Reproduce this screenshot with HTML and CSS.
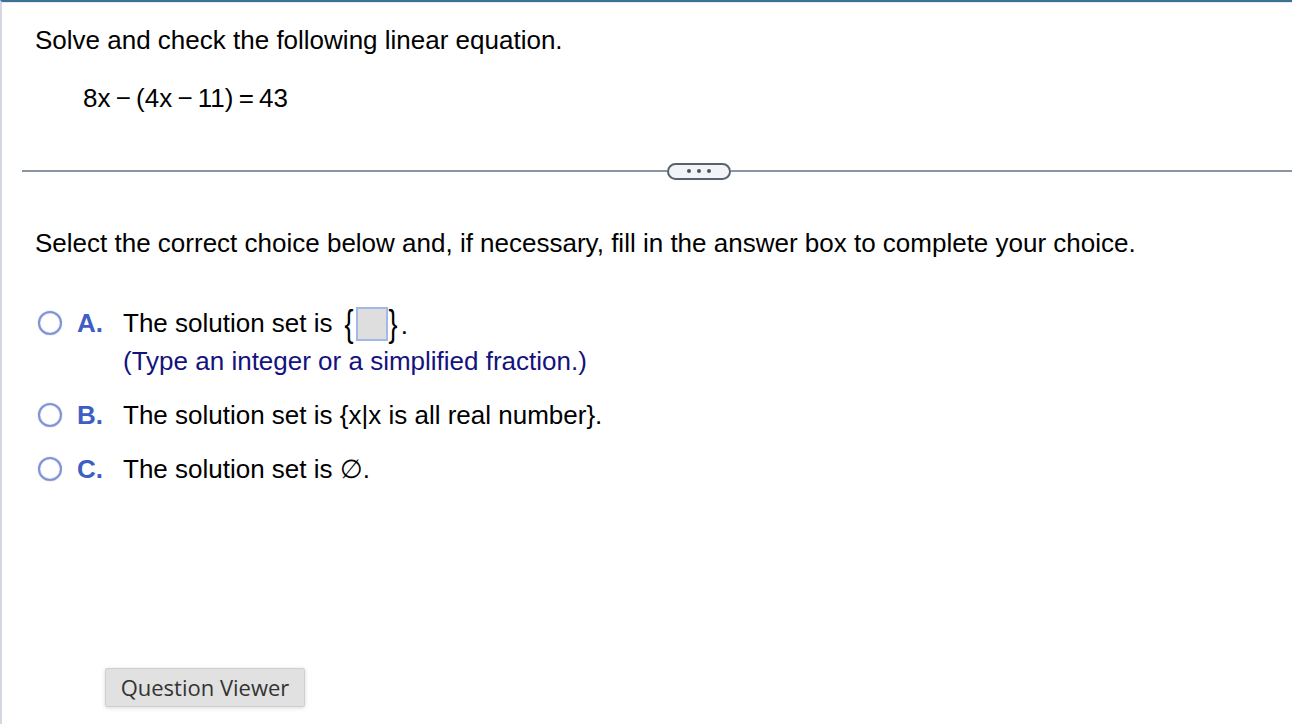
FILE: index.html
```html
<!DOCTYPE html>
<html>
<head>
<meta charset="utf-8">
<link rel="stylesheet" href="styles.css">
</head>
<body>
<div class="page">
  <div class="question">
    <p class="prompt">Solve and check the following linear equation.</p>
    <p class="equation">8x − (4x − 11) = 43</p>
  </div>
  <div class="divider">
    <div class="line"></div>
    <div class="pill"><span></span><span></span><span></span></div>
    <div class="line"></div>
  </div>
  <div class="answer">
    <p class="instr">Select the correct choice below and, if necessary, fill in the answer box to complete your choice.</p>
    <div class="choices">
      <div class="choice">
        <span class="radio"></span>
        <span class="letter">A.</span>
        <div class="body">
          <div class="line1">The solution set is <span class="brace first">{</span><span class="box"></span><span class="brace">}</span><span class="dot">.</span></div>
          <div class="hint">(Type an integer or a simplified fraction.)</div>
        </div>
      </div>
      <div class="choice">
        <span class="radio"></span>
        <span class="letter">B.</span>
        <div class="body">The solution set is {x|x is all real number}.</div>
      </div>
      <div class="choice">
        <span class="radio"></span>
        <span class="letter">C.</span>
        <div class="body">The solution set is ∅.</div>
      </div>
    </div>
  </div>
  <div class="footer">
    <button class="viewer">Question Viewer</button>
  </div>
</div>
</body>
</html>
```
FILE: styles.css
```css
html, body {
  margin: 0;
  padding: 0;
  background: #ffffff;
}
body {
  font-family: "Liberation Sans", Arial, sans-serif;
  color: #000;
  width: 1292px;
  height: 724px;
  overflow: hidden;
}
.page {
  box-sizing: border-box;
  height: 724px;
  border-top: 2px solid #3b7194;
  border-left: 2px solid #d3d7e3;
  box-shadow: inset 0 1px 0 #e6e8ee;
  display: flex;
  flex-direction: column;
}
.question {
  padding: 23px 0 0 33px;
}
.prompt {
  margin: 0;
  font-size: 26px;
  line-height: 30px;
}
.equation {
  margin: 28px 0 0 48px;
  font-size: 26px;
  line-height: 30px;
  word-spacing: -2px;
}
.divider {
  display: flex;
  align-items: center;
  margin: 49px 0 0 20px;
  height: 18px;
}
.divider .line {
  flex: 1;
  height: 2px;
  background: #8b95a2;
}
.divider .line:first-child {
  flex: 0 0 645px;
}
.pill {
  box-sizing: border-box;
  width: 64px;
  height: 17px;
  border: 2px solid #56636f;
  border-radius: 9px;
  background: #f3f4f7;
  display: flex;
  align-items: center;
  justify-content: center;
  gap: 6px;
}
.pill span {
  width: 4px;
  height: 4px;
  border-radius: 50%;
  background: #4a5560;
}
.answer {
  padding: 0 0 0 33px;
}
.instr {
  margin: 48px 0 0 0;
  font-size: 26px;
  line-height: 30px;
}
.choices {
  margin-top: 47px;
  display: flex;
  flex-direction: column;
  gap: 18px;
}
.choice {
  display: flex;
  align-items: flex-start;
  font-size: 26px;
  line-height: 36px;
}
.radio {
  box-sizing: border-box;
  flex: 0 0 auto;
  width: 24px;
  height: 24px;
  border: 2px solid #8093d6;
  border-radius: 50%;
  margin: 6px 0 0 3px;
  box-shadow: 0 0 1px #8093d6, inset 0 0 1px #8093d6;
}
.letter {
  box-sizing: border-box;
  flex: 0 0 auto;
  width: 61px;
  padding-left: 15px;
  font-weight: bold;
  color: #3e5ec6;
}
.body {
  flex: 1;
}
.line1 {
  display: flex;
  align-items: center;
  height: 36px;
  white-space: pre;
}
.brace {
  font-size: 36px;
  line-height: 36px;
  display: inline-block;
  transform: scaleX(0.75);
  margin-top: 2px;
}
.brace.first {
  margin-left: 3px;
  margin-right: 1px;
}
.box {
  display: inline-block;
  box-sizing: border-box;
  width: 32px;
  height: 34px;
  background: #dedede;
  border: 2px solid #a3b8e6;
  margin: 2px -1px 0 0;
}
.dot {
  margin-left: 2px;
  margin-top: 4px;
}
.hint {
  color: #14127e;
  line-height: 36px;
  margin-top: 2px;
}
.footer {
  margin-top: auto;
  padding: 0 0 17px 103px;
}
.viewer {
  font-family: "Open Sans", "Liberation Sans", sans-serif;
  width: 200px;
  height: 39px;
  font-size: 22px;
  line-height: 36px;
  color: #333;
  background: #e1e1e1;
  border: 1px solid #cfcfcf;
  border-radius: 2px;
  box-shadow: 0 1px 4px rgba(0,0,0,0.15);
  padding: 0 0 3px 0;
}
```
